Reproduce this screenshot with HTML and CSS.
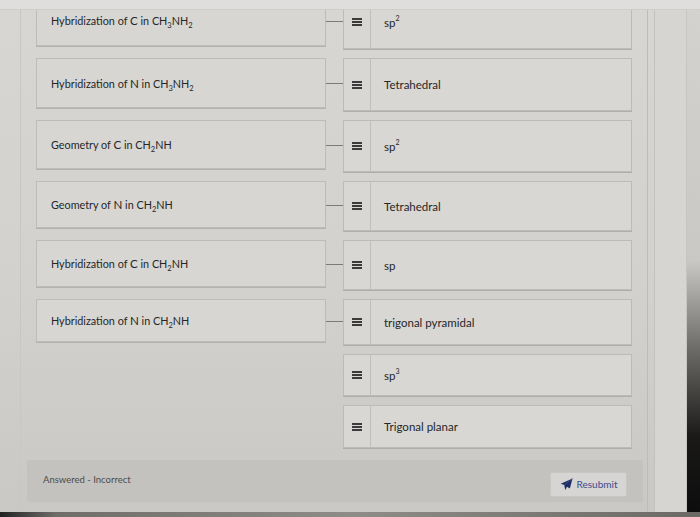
FILE: index.html
```html
<!DOCTYPE html>
<html lang="en">
<head>
<meta charset="utf-8">
<title>Matching</title>
<link rel="stylesheet" href="styles.css">
</head>
<body>
<div class="screen">
  <div class="topstrip"></div>
  <div class="stage">
    <div class="panel">
      <div class="viewport">
        <div class="match">
          <div class="prompt"><span class="txt">Hybridization of <span class="el">C</span> in CH<sub>3</sub>NH<sub>2</sub></span></div>
          <div class="link"><span class="wire"></span></div>
          <div class="answer"><span class="handle"><span class="bars"></span></span><span class="ans"><span class="txt">sp<sup>2</sup></span></span></div>

          <div class="prompt"><span class="txt">Hybridization of <span class="el">N</span> in CH<sub>3</sub>NH<sub>2</sub></span></div>
          <div class="link"><span class="wire"></span></div>
          <div class="answer"><span class="handle"><span class="bars"></span></span><span class="ans"><span class="txt">Tetrahedral</span></span></div>

          <div class="prompt"><span class="txt">Geometry of <span class="el">C</span> in CH<sub>2</sub>NH</span></div>
          <div class="link"><span class="wire"></span></div>
          <div class="answer"><span class="handle"><span class="bars"></span></span><span class="ans"><span class="txt">sp<sup>2</sup></span></span></div>

          <div class="prompt"><span class="txt">Geometry of <span class="el">N</span> in CH<sub>2</sub>NH</span></div>
          <div class="link"><span class="wire"></span></div>
          <div class="answer"><span class="handle"><span class="bars"></span></span><span class="ans"><span class="txt">Tetrahedral</span></span></div>

          <div class="prompt"><span class="txt">Hybridization of <span class="el">C</span> in CH<sub>2</sub>NH</span></div>
          <div class="link"><span class="wire"></span></div>
          <div class="answer"><span class="handle"><span class="bars"></span></span><span class="ans"><span class="txt">sp</span></span></div>

          <div class="prompt"><span class="txt">Hybridization of <span class="el">N</span> in CH<sub>2</sub>NH</span></div>
          <div class="link"><span class="wire"></span></div>
          <div class="answer"><span class="handle"><span class="bars"></span></span><span class="ans"><span class="txt">trigonal pyramidal</span></span></div>

          <div class="answer"><span class="handle"><span class="bars"></span></span><span class="ans"><span class="txt">sp<sup>3</sup></span></span></div>

          <div class="answer"><span class="handle"><span class="bars"></span></span><span class="ans"><span class="txt">Trigonal planar</span></span></div>
        </div>
      </div>
      <div class="footer">
        <span class="status">Answered - Incorrect</span>
        <button class="resubmit" type="button">
          <svg class="plane" width="13" height="13" viewBox="0 0 14 14" aria-hidden="true">
            <path d="M13.5 0.5 L0.8 6.2 L4.6 7.6 L5.6 13 L7.6 9.4 L10.6 11.2 Z" fill="#1f2f66"/>
            <path d="M13.5 0.5 L4.6 7.6" stroke="#4a5a8a" stroke-width="0.8" fill="none"/>
          </svg>
          <span>Resubmit</span>
        </button>
      </div>
    </div>
    <div class="side"></div>
    <div class="bezel"></div>
  </div>
  <div class="bottomband"></div>
</div>
</body>
</html>
```

FILE: styles.css
```css
* { box-sizing: border-box; }

html, body {
  margin: 0;
  padding: 0;
  background: #d2d1ce;
}

.screen {
  width: 700px;
  height: 517px;
  display: flex;
  flex-direction: column;
  overflow: hidden;
  font-family: Lato, "Open Sans", "Liberation Sans", sans-serif;
  color: #262626;
  background: linear-gradient(180deg, #d7d6d3 0%, #d2d1ce 55%, #c9c8c4 100%);
}

.topstrip {
  height: 10px;
  flex: none;
  background: #dfdedc;
  border-bottom: 1px solid #cfcecb;
}

.stage {
  flex: 1;
  display: flex;
  padding-left: 20px;
  min-height: 0;
}

.panel {
  width: 628px;
  flex: none;
  display: flex;
  flex-direction: column;
  border-left: 1px solid #c8c7c4;
  border-right: 1px solid #bdbcb8;
}

.viewport {
  height: 442px;
  overflow: hidden;
  flex: none;
}

.match {
  margin-top: -15px;
  margin-left: 15px;
  display: grid;
  grid-template-columns: 290px 17px 289px;
  grid-template-rows: 54px 53px 52px 50px 50px 46px 42px 43px;
  row-gap: 9px;
}

.prompt {
  grid-column: 1;
  display: flex;
  align-items: center;
  padding-left: 14px;
  font-size: 10.8px;
  background: #d7d6d3;
  border: 1px solid #bdbcb9;
  box-shadow: 0 1px 0 #b3b2ae;
  margin-bottom: 3px;
}

.txt {
  white-space: nowrap;
}

.el {
  font-size: 11.6px;
}

sub, sup {
  font-size: 7.5px;
  line-height: 0;
}

.link {
  grid-column: 2;
  display: flex;
  align-items: center;
  padding-bottom: 2px;
}

.wire {
  display: block;
  width: 100%;
  height: 1px;
  background: #7c7b78;
}

.answer {
  grid-column: 3;
  display: flex;
  align-items: stretch;
  background: #d8d7d4;
  border: 1px solid #bcbbb8;
  box-shadow: 0 1px 0 #afaeaa;
}

.handle {
  width: 27px;
  flex: none;
  display: flex;
  align-items: center;
  justify-content: center;
  border-right: 1px solid #c0bfbc;
}

.bars {
  display: block;
  width: 10px;
  height: 8px;
  background: linear-gradient(#3b3b3b 0 1.6px, transparent 1.6px 3.2px, #3b3b3b 3.2px 4.8px, transparent 4.8px 6.4px, #3b3b3b 6.4px 8px);
}

.ans {
  display: flex;
  align-items: center;
  padding-left: 13px;
  font-size: 11.5px;
}

.ans sup {
  font-size: 7px;
  position: relative;
  top: -1px;
}

.footer {
  margin: 8px 4px 0 6px;
  height: 42px;
  display: flex;
  align-items: center;
  justify-content: space-between;
  padding: 0 16px 0 16px;
  background: #c3c2be;
  border-radius: 2px;
}

.status {
  font-size: 9.5px;
  color: #4d4d4d;
  margin-top: -4px;
}

.resubmit {
  width: 77px;
  height: 25px;
  margin-top: 6px;
  display: flex;
  align-items: center;
  justify-content: center;
  gap: 4px;
  padding: 0;
  font-family: inherit;
  font-size: 10px;
  color: #3c4b8c;
  background: #d6d5d3;
  border: 1px solid #c8c7c3;
  border-radius: 2px;
}

.side {
  width: 33px;
  flex: none;
  margin-left: 6px;
  border-left: 1px solid #c3c2bf;
  border-right: 1px solid #c6c5c2;
  background: #d6d5d2;
}

.bezel {
  flex: 1;
  background: linear-gradient(180deg, #d3d2cf 0%, #c9c8c4 50%, #6a6965 68%, #1a1918 85%, #0d0d0d 100%);
}

.bottomband {
  height: 5px;
  flex: none;
  background: linear-gradient(90deg, #222 0, #6e6d69 8%, #8d8c88 50%, #6a6965 100%);
}
```
